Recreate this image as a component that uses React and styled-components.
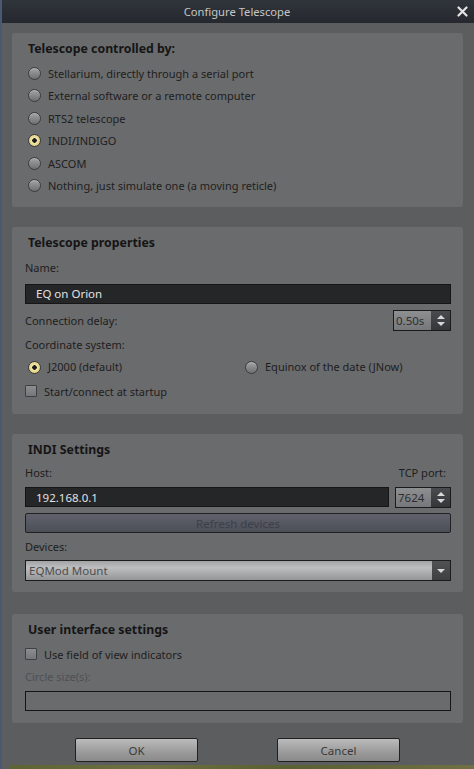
import React, { useState } from 'react';
import styled, { createGlobalStyle } from 'styled-components';

const GlobalStyle = createGlobalStyle`
    html, body {
        margin: 0;
        padding: 0;
        background: #58595b;
    }
    * {
        box-sizing: border-box;
    }
`;

const Window = styled.div`
    width: 474px;
    height: 769px;
    display: flex;
    flex-direction: column;
    font-family: 'Noto Sans', 'Open Sans', sans-serif;
    font-size: 11px;
    color: #1e1e1e;
    background: #5c5d5f;
    border-left: 2px solid #4b5871;
    overflow: hidden;
`;

const TitleBar = styled.div`
    position: relative;
    height: 23px;
    flex: none;
    display: flex;
    align-items: center;
    justify-content: center;
    background: linear-gradient(#30343b, #25282e);
    color: #c6c6c6;
    font-size: 11.2px;
    margin-left: -2px;
`;

const CloseButton = styled.span`
    position: absolute;
    right: 6px;
    top: 6px;
    width: 11px;
    height: 11px;
    display: flex;
`;

const Body = styled.div`
    flex: 1;
    display: flex;
    flex-direction: column;
    padding: 10px 11px 0 10px;
`;

const Group = styled.section`
    display: flex;
    flex-direction: column;
    background: #6a6b6d;
    border-radius: 3px;
    padding: 7px 12px ${(p) => p.$bottom || 12}px 13px;
    margin-bottom: ${(p) => p.$gap || 20}px;
`;

const GroupTitle = styled.div`
    font-weight: bold;
    font-size: 12.3px;
    line-height: 18px;
    color: #151515;
    margin-left: 3px;
    margin-bottom: ${(p) => p.$gap || 5}px;
`;

const Label = styled.div`
    line-height: 18px;
    color: ${(p) => (p.$disabled ? '#4f5053' : '#1e1e1e')};
    margin-bottom: ${(p) => p.$gap || 5}px;
`;

const Row = styled.div`
    display: flex;
    align-items: center;
    justify-content: space-between;
    line-height: 18px;
    margin-bottom: ${(p) => p.$gap || 5}px;
`;

const OptionRow = styled.label`
    display: flex;
    align-items: center;
    height: ${(p) => p.$h || 22.5}px;
    gap: 7px;
    padding-left: 3px;
    width: ${(p) => p.$w || 'auto'};
    flex: ${(p) => (p.$grow ? 1 : 'none')};
`;

const RadioDot = styled.span`
    width: 13px;
    height: 13px;
    border-radius: 50%;
    flex: none;
    border: 1px solid #3a3b3d;
    background: ${(p) =>
        p.$checked
            ? 'radial-gradient(circle, #1c1c1c 0 2px, #f4eaa8 2.5px, #cdb660 100%)'
            : 'linear-gradient(#a3a4a6, #6e6f71)'};
    box-shadow: inset 0 1px 0 rgba(255, 255, 255, 0.2);
`;

const CheckBox = styled.span`
    width: 12px;
    height: 12px;
    flex: none;
    border: 1px solid #3e3f41;
    border-radius: 1px;
    background: linear-gradient(#8d8e90, #75767a);
`;

const CheckRow = styled.label`
    display: flex;
    align-items: center;
    height: 22px;
    gap: 7px;
    margin-bottom: ${(p) => p.$gap || 0}px;
`;

const TextField = styled.div`
    height: 20px;
    flex: ${(p) => (p.$grow ? 1 : 'none')};
    display: flex;
    align-items: center;
    padding-left: 10px;
    background: ${(p) => (p.$disabled ? 'transparent' : '#252628')};
    border: 1px solid #151515;
    color: #e2e2e2;
    font-size: 11.5px;
`;

const Spin = styled.div`
    display: flex;
    width: ${(p) => p.$w || 58}px;
    height: 21px;
    border: 1px solid #1b1b1b;
    background: linear-gradient(#8e8f91, #76777a);
    flex: none;
`;

const SpinValue = styled.div`
    flex: 1;
    display: flex;
    align-items: center;
    padding-left: 2px;
    color: #2e2e2e;
    font-size: 11.5px;
`;

const SpinButtons = styled.div`
    width: 19px;
    background: linear-gradient(#4a4b4e, #353638);
    display: flex;
    flex-direction: column;
    align-items: center;
    justify-content: center;
    gap: 3px;
`;

const Tri = styled.span`
    width: 0;
    height: 0;
    border-left: 4px solid transparent;
    border-right: 4px solid transparent;
    ${(p) => (p.$down ? 'border-top: 4px solid #d8d8d8;' : 'border-bottom: 4px solid #d8d8d8;')}
`;

const HostRow = styled.div`
    display: flex;
    align-items: flex-start;
    gap: 6px;
    margin-bottom: 5px;
`;

const FlatButton = styled.div`
    height: 20px;
    display: flex;
    align-items: center;
    justify-content: center;
    border: 1px solid #1f2024;
    border-radius: 2px;
    background: linear-gradient(#5f616c, #4c4e58);
    color: #3d4048;
    font-size: 11.5px;
    margin-bottom: 5px;
`;

const Combo = styled.div`
    height: 21px;
    display: flex;
    border: 1px solid #1c1c1c;
    background: linear-gradient(#a2a3a5 0%, #bdbebf 35%, #949597 100%);
`;

const ComboText = styled.div`
    flex: 1;
    display: flex;
    align-items: center;
    padding-left: 3px;
    color: #4d4d4f;
    font-size: 11.5px;
`;

const ComboArrow = styled.div`
    width: 18px;
    background: linear-gradient(#505153, #3e3f41);
    display: flex;
    align-items: center;
    justify-content: center;
`;

const Footer = styled.div`
    display: flex;
    justify-content: center;
    gap: 79px;
    margin-left: -11px;
    margin-right: -11px;
`;

const DialogButton = styled.button`
    width: 123px;
    height: 24px;
    border: 1px solid #202020;
    border-radius: 2px;
    background: linear-gradient(#bcbcbc, #9a9a9a 60%, #8a8a8a);
    color: #3a3a3a;
    font-family: 'Noto Sans', 'Open Sans', sans-serif;
    font-size: 11.5px;
    padding: 0;
`;

const Grass = styled.div`
    height: 4px;
    margin-top: auto;
    margin-left: -2px;
    margin-right: -11px;
    background: linear-gradient(90deg, #5d6434, #6e7040 30%, #596032 60%, #707044);
`;

const options = [
    'Stellarium, directly through a serial port',
    'External software or a remote computer',
    'RTS2 telescope',
    'INDI/INDIGO',
    'ASCOM',
    'Nothing, just simulate one (a moving reticle)',
];

function SpinBox({ value, width }) {
    return (
        <Spin $w={width}>
            <SpinValue>{value}</SpinValue>
            <SpinButtons>
                <Tri />
                <Tri $down />
            </SpinButtons>
        </Spin>
    );
}

export default function App() {
    const [control] = useState(3);

    return (
        <>
            <GlobalStyle />
            <Window>
                <TitleBar>
                    Configure Telescope
                    <CloseButton>
                        <svg width="11" height="11" viewBox="0 0 11 11">
                            <path d="M1.5 1.5 L9.5 9.5 M9.5 1.5 L1.5 9.5" stroke="#e4e4e4" strokeWidth="2.2" strokeLinecap="round" />
                        </svg>
                    </CloseButton>
                </TitleBar>
                <Body>
                    <Group $bottom={10}>
                        <GroupTitle $gap={4}>Telescope controlled by:</GroupTitle>
                        {options.map((o, i) => (
                            <OptionRow key={o}>
                                <RadioDot $checked={i === control} />
                                {o}
                            </OptionRow>
                        ))}
                    </Group>

                    <Group>
                        <GroupTitle $gap={7}>Telescope properties</GroupTitle>
                        <Label $gap={7}>Name:</Label>
                        <Row $gap={6}>
                            <TextField $grow>EQ on Orion</TextField>
                        </Row>
                        <Row $gap={5}>
                            <span>Connection delay:</span>
                            <SpinBox value="0.50s" />
                        </Row>
                        <Label $gap={2}>Coordinate system:</Label>
                        <Row $gap={2}>
                            <OptionRow $h={22} $w="217px">
                                <RadioDot $checked />
                                J2000 (default)
                            </OptionRow>
                            <OptionRow $h={22} $grow>
                                <RadioDot />
                                Equinox of the date (JNow)
                            </OptionRow>
                        </Row>
                        <CheckRow>
                            <CheckBox />
                            Start/connect at startup
                        </CheckRow>
                    </Group>

                    <Group $bottom={11} $gap={22}>
                        <GroupTitle>INDI Settings</GroupTitle>
                        <Row $gap={5}>
                            <span>Host:</span>
                            <span style={{ marginRight: 5 }}>TCP port:</span>
                        </Row>
                        <HostRow>
                            <TextField $grow>192.168.0.1</TextField>
                            <SpinBox value="7624" width={56} />
                        </HostRow>
                        <FlatButton>Refresh devices</FlatButton>
                        <Label $gap={4}>Devices:</Label>
                        <Combo>
                            <ComboText>EQMod Mount</ComboText>
                            <ComboArrow>
                                <Tri $down />
                            </ComboArrow>
                        </Combo>
                    </Group>

                    <Group $gap={15}>
                        <GroupTitle $gap={4}>User interface settings</GroupTitle>
                        <CheckRow $gap={3}>
                            <CheckBox />
                            Use field of view indicators
                        </CheckRow>
                        <Label $disabled $gap={5}>Circle size(s):</Label>
                        <TextField $disabled />
                    </Group>

                    <Footer>
                        <DialogButton>OK</DialogButton>
                        <DialogButton>Cancel</DialogButton>
                    </Footer>
                    <Grass />
                </Body>
            </Window>
        </>
    );
}
